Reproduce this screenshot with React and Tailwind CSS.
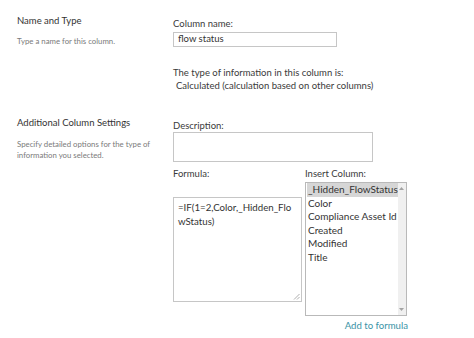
import React from "react";

const font = { fontFamily: "Lato, 'Liberation Sans', sans-serif" };

export default function App() {
  const items = ["_Hidden_FlowStatus", "Color", "Compliance Asset Id", "Created", "Modified", "Title"];
  return (
    <div className="w-[474px] h-[338px] bg-white overflow-hidden text-[#3a3a3a]" style={font}>
      {/* Section 1 */}
      <div className="flex pt-[15px]">
        <div className="w-[173px] pl-[17px] shrink-0">
          <div className="text-[9.5px] leading-[12px] text-[#333]">Name and Type</div>
          <div className="mt-[9px] text-[7.8px] leading-[10.5px] text-[#7a7a7a]">Type a name for this column.</div>
        </div>
        <div className="flex flex-col pt-[3px]">
          <div className="text-[9.5px] leading-[12px]">Column name:</div>
          <div className="mt-[2px] w-[164px] h-[15px] border border-[#c6c6c6] flex items-center pl-[4px] text-[9.5px] text-[#333]">flow status</div>
          <div className="mt-[20px] text-[9.5px] leading-[12px]">The type of information in this column is:</div>
          <div className="mt-[1px] pl-[3px] text-[9.5px] leading-[12px]">Calculated (calculation based on other columns)</div>
        </div>
      </div>
      {/* Section 2 */}
      <div className="flex pt-[25px]">
        <div className="w-[173px] pl-[17px] shrink-0">
          <div className="text-[9.5px] leading-[12px] text-[#333]">Additional Column Settings</div>
          <div className="mt-[10px] text-[7.8px] leading-[10.5px] text-[#7a7a7a]">
            Specify detailed options for the type of<br />information you selected.
          </div>
        </div>
        <div className="flex flex-col pt-[3px]">
          <div className="text-[9.5px] leading-[12px]">Description:</div>
          <textarea
            className="w-[200px] h-[30px] border border-[#c6c6c6] outline-none resize-none"
            defaultValue=""
          />
          <div className="flex mt-[6px]">
            <div className="flex flex-col w-[132px]">
              <div className="text-[9.5px] leading-[12px]">Formula:</div>
              <div className="relative mt-[17px] w-[129px] h-[105px] border border-[#c6c6c6] px-[4px] pt-[3px] text-[9.7px] leading-[13.5px] text-[#333]">
                <div>=IF(1=2,Color,_Hidden_Flo</div>
                <div>wStatus)</div>
                <svg className="absolute right-[1px] bottom-[1px]" width="7" height="7" viewBox="0 0 7 7">
                  <line x1="6.5" y1="1" x2="1" y2="6.5" stroke="#999" strokeWidth="0.8" />
                  <line x1="6.5" y1="4" x2="4" y2="6.5" stroke="#999" strokeWidth="0.8" />
                </svg>
              </div>
            </div>
            <div className="flex flex-col">
              <div className="text-[9.5px] leading-[12px]">Insert Column:</div>
              <div className="mt-[2px] w-[102px] h-[134px] border border-[#b9b9b9] flex">
                <div className="flex-1 pl-[1px]">
                  {items.map((it, i) => (
                    <div
                      key={it}
                      className={
                        "h-[13.5px] leading-[13.5px] pl-[1px] text-[10px] whitespace-nowrap text-[#333] " +
                        (i === 0 ? "bg-[#d6d6d6]" : "")
                      }
                    >
                      {it}
                    </div>
                  ))}
                </div>
                <div className="w-[11px] bg-[#f0f0f0] flex flex-col justify-between items-center py-[4px]">
                  <svg width="5" height="3" viewBox="0 0 5 3"><polygon points="2.5,0 5,3 0,3" fill="#a3a3a3" /></svg>
                  <svg width="5" height="3" viewBox="0 0 5 3"><polygon points="0,0 5,0 2.5,3" fill="#a3a3a3" /></svg>
                </div>
              </div>
              <div className="mt-[3px] text-right text-[9.6px] leading-[13px] text-[#3a93a6] w-[103px]">Add to formula</div>
            </div>
          </div>
        </div>
      </div>
    </div>
  );
}
